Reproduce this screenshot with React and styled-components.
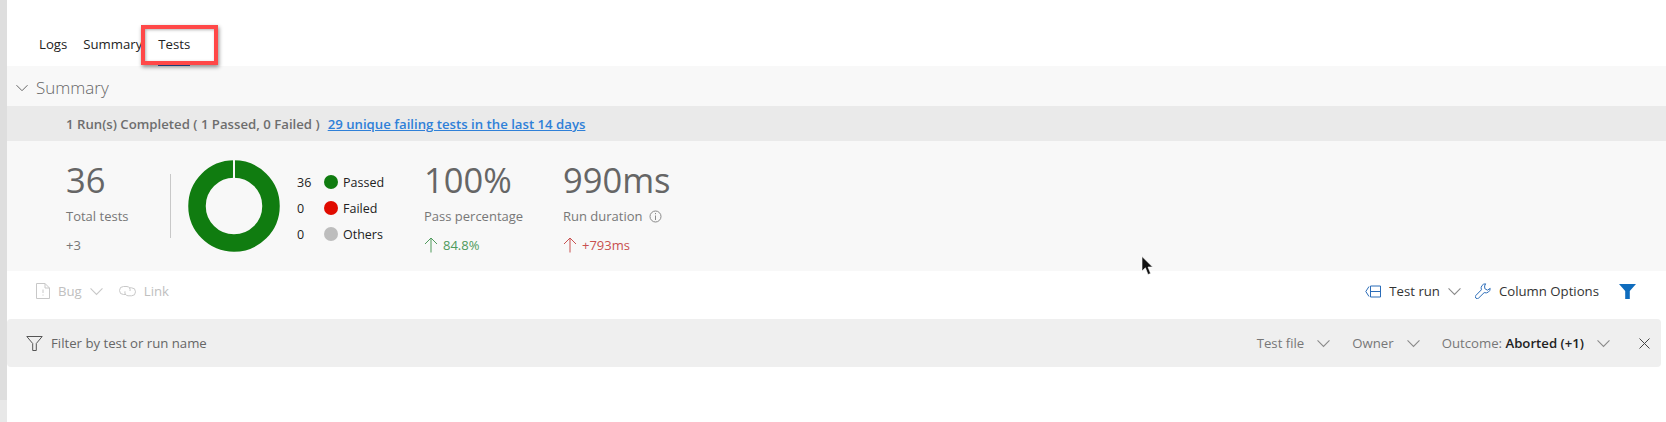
import React from 'react';
import styled, { createGlobalStyle } from 'styled-components';

const GlobalStyle = createGlobalStyle`
  html, body {
    margin: 0;
    padding: 0;
    height: 100%;
    background: #fff;
    overflow: hidden;
    font-family: "Open Sans", "Noto Sans", sans-serif;
  }
`;

const Chevron = ({ color = '#8a8a8a', size = 13 }) => (
  <svg width={size} height={size} viewBox="0 0 12 12" fill="none" stroke={color} strokeWidth="1">
    <path d="M0.5 3.2 L6 8.7 L11.5 3.2" />
  </svg>
);

const ArrowUp = ({ color }) => (
  <svg width="14" height="16" viewBox="0 0 14 16" fill="none" stroke={color} strokeWidth="1">
    <path d="M7 15.5 V1 M1 7 L7 1 L13 7" />
  </svg>
);

const Donut = () => (
  <DonutSvg width="92" height="92" viewBox="0 0 92 92">
    <circle cx="46" cy="46" r="37" fill="none" stroke="#107c10" strokeWidth="17.5" />
    <rect x="45" y="0" width="2" height="19" fill="#f8f8f8" />
  </DonutSvg>
);

const InfoIcon = () => (
  <svg width="13" height="13" viewBox="0 0 13 13" fill="none" stroke="#8a8a8a">
    <circle cx="6.5" cy="6.5" r="5.5" />
    <path d="M6.5 5.5 V10 M6.5 3 V4.2" />
  </svg>
);

const BugIcon = () => (
  <svg width="14" height="16" viewBox="0 0 14 16" fill="none" stroke="#c8c8c8">
    <path d="M0.5 0.5 H9 L13.5 5 V15.5 H0.5 Z M9 0.5 V5 H13.5 M7 6.5 V10 M7 11.5 V12.6" />
  </svg>
);

const LinkIcon = () => (
  <LinkSvg width="17" height="12" viewBox="0 0 17 12" fill="none" stroke="#c8c8c8">
    <path d="M7 9.5 H4.5 A4 4 0 0 1 4.5 1.5 H8 A3.8 3.8 0 0 1 11 6" />
    <path d="M10 2.8 H12.5 A4 4 0 0 1 12.5 10.8 H9 A3.8 3.8 0 0 1 6 6.3" />
  </LinkSvg>
);

const GroupIcon = () => (
  <svg width="16" height="13" viewBox="0 0 16 13" fill="none" stroke="#2b6cb8">
    <path d="M4 1.5 L0.8 6.5 L4 11.5" />
    <path d="M5.5 1 H15.5 V12 H5.5 Z M5.5 6.5 H15.5" />
  </svg>
);

const WrenchIcon = () => (
  <WrenchSvg width="16" height="16" viewBox="0 0 16 16" fill="none" stroke="#2b6cb8">
    <path d="M10.6 0.8 A4.4 4.4 0 0 0 6.4 6.8 L0.9 12.4 A1.9 1.9 0 0 0 3.6 15.1 L9.2 9.6 A4.4 4.4 0 0 0 15.2 5.4 L12.4 7.2 L9.8 5.6 L9.6 3 Z" />
  </WrenchSvg>
);

const SolidFilter = () => (
  <SolidFilterSvg width="17" height="15" viewBox="0 0 17 15" fill="#0f6cbd">
    <path d="M0 0 H17 L10.8 7 V15 H6.2 V7 Z" />
  </SolidFilterSvg>
);

const OutlineFilter = () => (
  <svg width="17" height="15" viewBox="0 0 17 15" fill="none" stroke="#555">
    <path d="M0.8 0.5 H16.2 L10.3 7.5 V14.5 H6.7 V7.5 Z" />
  </svg>
);

const CloseIcon = () => (
  <svg width="11" height="11" viewBox="0 0 11 11" fill="none" stroke="#444">
    <path d="M0.5 0.5 L10.5 10.5 M10.5 0.5 L0.5 10.5" />
  </svg>
);

const Pointer = () => (
  <svg width="13" height="20" viewBox="0 0 13 20">
    <path d="M1 0.5 V15 L4.4 11.8 L7 18.5 L9.6 17.5 L7 11 H11.6 Z" fill="#111" stroke="#fff" strokeWidth="0.6" />
  </svg>
);

const LEGEND = [
  { count: 36, label: 'Passed', color: '#107c10' },
  { count: 0, label: 'Failed', color: '#e00b00' },
  { count: 0, label: 'Others', color: '#bdbdbd' },
];

export default function App() {
  return (
    <Page>
      <GlobalStyle />
      <LeftStrip />
      <Main>
        <Tabs>
          <Tab>Logs</Tab>
          <Tab>Summary</Tab>
          <Tab $active>Tests</Tab>
          <Highlight />
        </Tabs>
        <SectionHeader>
          <Chevron color="#666" size={12} />
          <SectionTitle>Summary</SectionTitle>
        </SectionHeader>
        <InfoBar>
          <span>1 Run(s) Completed ( 1 Passed, 0 Failed )</span>
          <InfoLink>29 unique failing tests in the last 14 days</InfoLink>
        </InfoBar>
        <Metrics>
          <TotalBlock>
            <BigNumber>36</BigNumber>
            <MetricLabel>Total tests</MetricLabel>
            <Delta>+3</Delta>
          </TotalBlock>
          <Divider />
          <Donut />
          <Legend>
            {LEGEND.map((row) => (
              <LegendRow key={row.label}>
                <LegendCount>{row.count}</LegendCount>
                <LegendDot $color={row.color} />
                <span>{row.label}</span>
              </LegendRow>
            ))}
          </Legend>
          <PassBlock>
            <BigNumber>100%</BigNumber>
            <MetricLabel>Pass percentage</MetricLabel>
            <Delta $color="#4e9a5b">
              <ArrowUp color="#4e9a5b" />
              84.8%
            </Delta>
          </PassBlock>
          <DurationBlock>
            <BigNumber>990ms</BigNumber>
            <MetricLabel>
              Run duration
              <InfoIcon />
            </MetricLabel>
            <Delta $color="#c8504f">
              <ArrowUp color="#c8504f" />
              +793ms
            </Delta>
          </DurationBlock>
        </Metrics>
        <Toolbar>
          <ToolGroup $disabled>
            <BugIcon />
            <span>Bug</span>
            <Chevron color="#c8c8c8" />
            <LinkIcon />
            <span>Link</span>
          </ToolGroup>
          <ToolGroup>
            <GroupIcon />
            <span>Test run</span>
            <Chevron />
            <WrenchIcon />
            <span>Column Options</span>
            <SolidFilter />
          </ToolGroup>
        </Toolbar>
        <FilterBar>
          <FilterInput>
            <OutlineFilter />
            <span>Filter by test or run name</span>
          </FilterInput>
          <FilterOptions>
            <FilterOption>
              Test file
              <Chevron />
            </FilterOption>
            <FilterOption>
              Owner
              <Chevron />
            </FilterOption>
            <FilterOption>
              <span>
                Outcome: <strong>Aborted (+1)</strong>
              </span>
              <Chevron />
            </FilterOption>
            <CloseSlot>
              <CloseIcon />
            </CloseSlot>
          </FilterOptions>
        </FilterBar>
      </Main>
      <CursorSpot>
        <Pointer />
      </CursorSpot>
    </Page>
  );
}

const Page = styled.div`
  position: relative;
  display: flex;
  width: 1666px;
  height: 422px;
  overflow: hidden;
  background: #fff;
  font-size: 13.2px;
  color: #222;
`;

const LeftStrip = styled.div`
  flex: none;
  width: 7px;
  height: 400px;
  background: #dedede;
  box-shadow: 0 22px 0 #e8e8e8;
`;

const Main = styled.div`
  flex: 1;
  min-width: 0;
  display: flex;
  flex-direction: column;
`;

const Tabs = styled.div`
  position: relative;
  height: 66px;
  flex: none;
  display: flex;
  padding: 35px 0 0 32px;
  box-sizing: border-box;
`;

const Tab = styled.div`
  position: relative;
  height: 18px;
  line-height: 18px;
  margin-right: 16px;
  color: #222;

  ${(p) =>
    p.$active &&
    `
    &::after {
      content: '';
      position: absolute;
      left: 0;
      right: 0;
      top: 29px;
      height: 2px;
      background: #2b5fb3;
    }
  `}
`;

const Highlight = styled.div`
  position: absolute;
  left: 134px;
  top: 25px;
  width: 77px;
  height: 40px;
  box-sizing: border-box;
  border: 4px solid #ff4848;
  box-shadow: 1px 2px 4px rgba(0, 0, 0, 0.45), inset 1px 1px 3px rgba(0, 0, 0, 0.3);
`;

const SectionHeader = styled.div`
  height: 40px;
  flex: none;
  display: flex;
  align-items: center;
  gap: 8px;
  padding: 3px 0 0 9px;
  box-sizing: border-box;
  background: #f8f8f8;
`;

const SectionTitle = styled.div`
  font-size: 17px;
  font-weight: 300;
  color: #666;
`;

const InfoBar = styled.div`
  height: 35px;
  flex: none;
  display: flex;
  align-items: center;
  gap: 8px;
  padding: 1px 0 0 59px;
  box-sizing: border-box;
  background: #eaeaea;
  color: #6e6e6e;
  font-size: 13.2px;
  font-weight: 600;
`;

const InfoLink = styled.a`
  color: #2f80d8;
  text-decoration: underline;
`;

const Metrics = styled.div`
  height: 130px;
  flex: none;
  display: flex;
  background: #f8f8f8;
  padding: 17px 0 0 59px;
  box-sizing: border-box;
`;

const TotalBlock = styled.div`
  width: 104px;
  flex: none;
`;

const PassBlock = styled.div`
  width: 139px;
  flex: none;
`;

const DurationBlock = styled.div`
  flex: none;
`;

const BigNumber = styled.div`
  font-size: 34.5px;
  line-height: 44px;
  color: #666;
`;

const MetricLabel = styled.div`
  display: flex;
  align-items: center;
  gap: 6px;
  margin-top: 4px;
  height: 20px;
  color: #777;
  font-size: 13px;
`;

const Delta = styled.div`
  display: flex;
  align-items: center;
  gap: 5px;
  margin-top: 9px;
  height: 20px;
  font-size: 13px;
  color: ${(p) => p.$color || '#777'};
`;

const Divider = styled.div`
  width: 1px;
  height: 64px;
  margin: 16px 17px 0 0;
  background: #c8c8c8;
`;

const DonutSvg = styled.svg`
  flex: none;
  margin-top: 2px;
`;

const Legend = styled.div`
  width: 127px;
  flex: none;
  display: flex;
  flex-direction: column;
  margin: 11px 0 0 17px;
`;

const LegendRow = styled.div`
  display: flex;
  align-items: center;
  height: 26px;
  font-size: 12.5px;
`;

const LegendCount = styled.span`
  width: 27px;
`;

const LegendDot = styled.span`
  width: 14px;
  height: 14px;
  margin-right: 5px;
  border-radius: 50%;
  background: ${(p) => p.$color};
`;

const Toolbar = styled.div`
  height: 48px;
  flex: none;
  display: flex;
  align-items: center;
  justify-content: space-between;
  padding: 0 30px 8px 29px;
  box-sizing: border-box;
`;

const ToolGroup = styled.div`
  display: flex;
  align-items: center;
  gap: 8px;
  color: ${(p) => (p.$disabled ? '#c0c0c0' : '#333')};
`;

const LinkSvg = styled.svg`
  margin-left: 8px;
`;

const WrenchSvg = styled.svg`
  margin-left: 6px;
`;

const SolidFilterSvg = styled.svg`
  margin-left: 12px;
`;

const FilterBar = styled.div`
  height: 48px;
  flex: none;
  display: flex;
  align-items: center;
  justify-content: space-between;
  margin-right: 5px;
  padding: 0 11px 0 19px;
  background: #efefef;
  border-radius: 4px;
  color: #666;
`;

const FilterInput = styled.div`
  display: flex;
  align-items: center;
  gap: 8px;
`;

const FilterOptions = styled.div`
  display: flex;
  align-items: center;
  gap: 22px;
  color: #777;

  strong {
    color: #222;
    font-weight: 600;
  }
`;

const FilterOption = styled.div`
  display: flex;
  align-items: center;
  gap: 13px;
`;

const CloseSlot = styled.div`
  display: flex;
  margin-left: 7px;
`;

const CursorSpot = styled.div`
  position: absolute;
  left: 1141px;
  top: 256px;
  line-height: 0;
`;
